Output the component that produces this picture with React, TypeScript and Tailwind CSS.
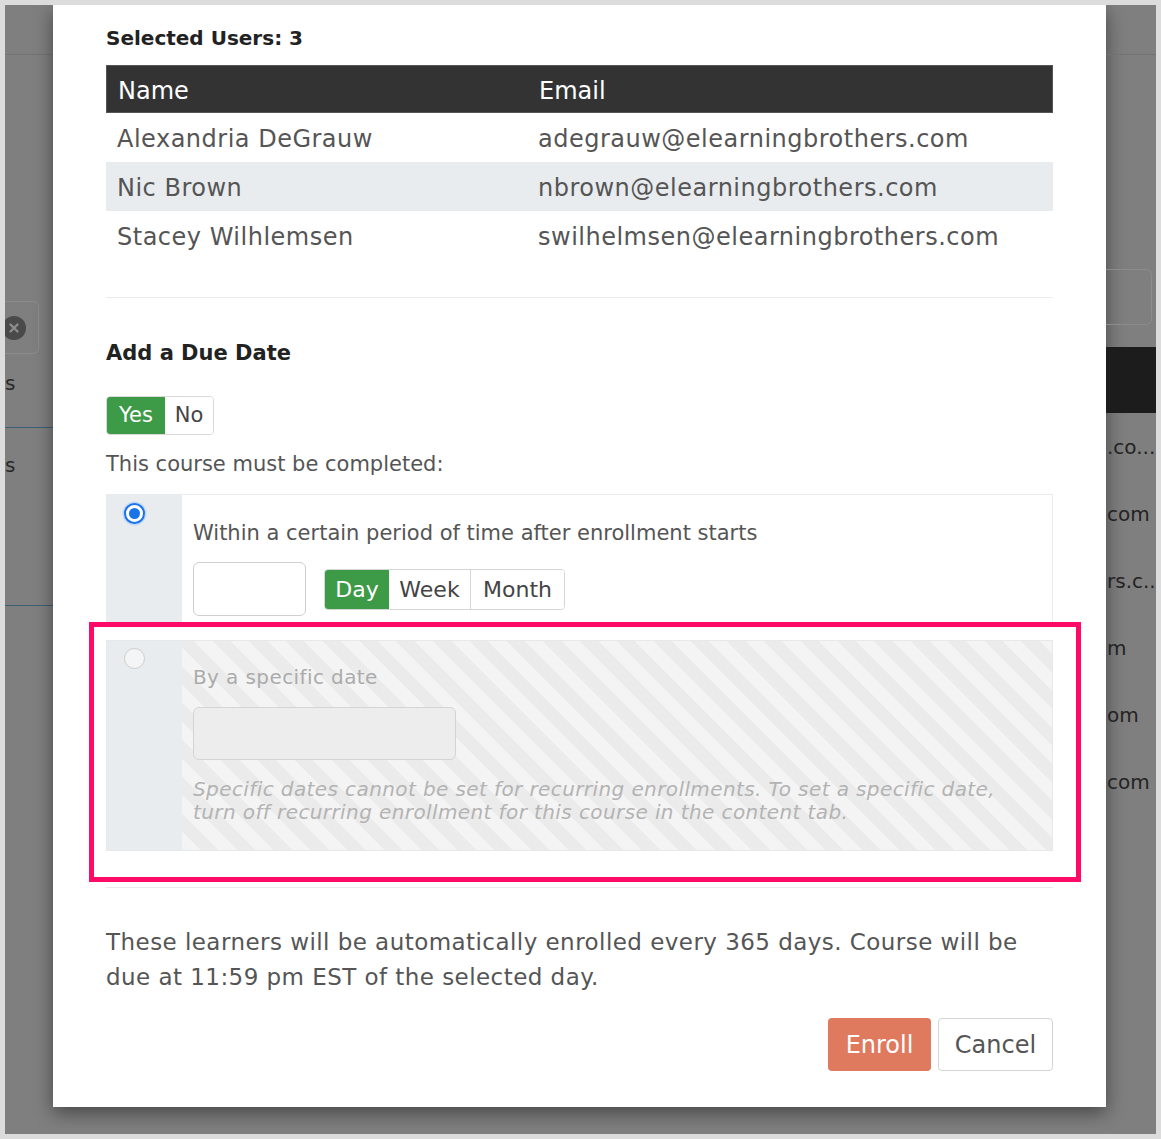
import React from 'react';

const users = [
  { name: 'Alexandria DeGrauw', email: 'adegrauw@elearningbrothers.com' },
  { name: 'Nic Brown', email: 'nbrown@elearningbrothers.com' },
  { name: 'Stacey Wilhlemsen', email: 'swilhelmsen@elearningbrothers.com' }
];

const rightRows = ['.co...', 'com', 'rs.c...', 'm', 'om', 'com'];

const LeftStrip = () => (
  <div className="flex w-[48px] shrink-0 flex-col text-[20px] text-[#2a2a2a]">
    <div className="h-[50px] border-b border-[#737373]" />
    <div className="mt-[246px] flex h-[53px] w-[34px] items-center rounded-r-md border border-l-0 border-[#8c8c8c]">
      <div className="-ml-[3px] flex h-[24px] w-[24px] items-center justify-center rounded-full bg-[#4a4a4a]">
        <svg width="12" height="12" viewBox="0 0 12 12">
          <path d="M2.5 2.5L9.5 9.5M9.5 2.5L2.5 9.5" stroke="#8c8c8c" strokeWidth="2.4" strokeLinecap="round" />
        </svg>
      </div>
    </div>
    <div className="mt-[14px] h-[30px] leading-[30px]">s</div>
    <div className="mt-[29px] h-px bg-[#3d5f73]" />
    <div className="mt-[22px] h-[30px] leading-[30px]">s</div>
    <div className="mt-[125px] h-px bg-[#3d5f73]" />
  </div>
);

const RightStrip = () => (
  <div className="flex flex-1 flex-col text-[20px] text-[#232323]">
    <div className="h-[50px] border-b border-[#737373]" />
    <div className="mt-[214px] h-[56px] w-[46px] rounded-r-md border border-l-0 border-[#8c8c8c]" />
    <div className="mt-[22px] h-[66px] bg-[#1c1c1c]" />
    {rightRows.map((t, i) => (
      <div key={i} className="flex h-[67px] items-center overflow-hidden whitespace-nowrap pl-[1px]">
        {t}
      </div>
    ))}
  </div>
);

const RadioOn = () => (
  <div className="flex h-[21px] w-[21px] items-center justify-center rounded-full border-2 border-[#1a73e8] bg-white shadow-[0_0_0_1.5px_#c3d8f8]">
    <div className="h-[11px] w-[11px] rounded-full bg-[#1a73e8]" />
  </div>
);

const RadioOff = () => (
  <div className="h-[21px] w-[21px] rounded-full border border-[#cdcdcd] bg-[#f4f5f6]" />
);

export default function App() {
  return (
    <div className="flex h-[1139px] w-[1161px] overflow-hidden border-[5px] border-[#dcdcdc] bg-[#7f7f7f] font-['DejaVu_Sans',sans-serif]">
      <LeftStrip />

      <div className="h-[1102px] w-[1053px] shrink-0 bg-white px-[53px] pt-[20px] shadow-[0_6px_18px_rgba(0,0,0,0.45)]">
        <h2 className="text-[20px] font-bold leading-[26px] text-[#222]">Selected Users: 3</h2>

        <div className="mt-[14px]">
          <div className="flex h-[48px] items-center border border-[#555] bg-[#333] pt-[3px] text-[24px] text-white">
            <div className="w-[421px] pl-[11px]">Name</div>
            <div className="pl-[11px]">Email</div>
          </div>
          {users.map((u, i) => (
            <div
              key={u.email}
              className={`flex h-[49px] items-center pt-[3px] text-[24px] tracking-[0.5px] text-[#555] ${i === 1 ? 'bg-[#e9ecef]' : 'bg-white'}`}
            >
              <div className="w-[421px] pl-[11px]">{u.name}</div>
              <div className="pl-[11px]">{u.email}</div>
            </div>
          ))}
        </div>

        <div className="mt-[37px] h-px bg-[#ebebeb]" />

        <h3 className="mt-[42px] text-[21px] font-bold leading-[26px] text-[#222]">Add a Due Date</h3>

        <div className="mt-[30px] flex h-[39px] w-[108px] overflow-hidden rounded border border-[#d9d9d9] text-[21px]">
          <div className="flex w-[58px] items-center justify-center bg-[#3d9a47] text-white">Yes</div>
          <div className="flex flex-1 items-center justify-center bg-white text-[#444]">No</div>
        </div>

        <p className="mt-[16px] text-[21px] leading-[26px] text-[#555]">This course must be completed:</p>

        <div className="mt-[17px] flex h-[131px] border border-[#e9ecef]">
          <div className="w-[75px] bg-[#e9ecef] pl-[17px] pt-[8px]">
            <RadioOn />
          </div>
          <div className="flex-1 bg-white pl-[11px] pt-[25px]">
            <div className="text-[21px] leading-[26px] text-[#555]">
              Within a certain period of time after enrollment starts
            </div>
            <div className="mt-[16px] flex items-center">
              <div className="h-[54px] w-[113px] rounded-md border border-[#cfcfcf] bg-white" />
              <div className="ml-[18px] flex h-[41px] overflow-hidden rounded border border-[#d6d6d6] text-[22px]">
                <div className="flex w-[64px] items-center justify-center bg-[#3d9a47] text-white">Day</div>
                <div className="flex w-[82px] items-center justify-center border-r border-[#d6d6d6] bg-white text-[#444]">Week</div>
                <div className="flex w-[93px] items-center justify-center bg-white text-[#444]">Month</div>
              </div>
            </div>
          </div>
        </div>

        <div className="relative mt-[15px]">
          <div className="flex h-[211px] border border-[#e6e9ec]">
            <div className="w-[75px] bg-[#e9ecef] pl-[17px] pt-[7px]">
              <RadioOff />
            </div>
            <div className="flex-1 bg-[repeating-linear-gradient(45deg,#f4f4f4_0px,#f4f4f4_13px,#ebebeb_13px,#ebebeb_26px)] pl-[11px] pt-[23px]">
              <div className="text-[20px] leading-[26px] tracking-[0.4px] text-[#ababab]">By a specific date</div>
              <div className="mt-[17px] h-[53px] w-[263px] rounded-md border border-[#d4d4d4] bg-[#ededed]" />
              <p className="mt-[18px] text-[20px] italic leading-[23px] tracking-[0.4px] text-[#b3b3b3]">
                Specific dates cannot be set for recurring enrollments. To set a specific date,
                <br />
                turn off recurring enrollment for this course in the content tab.
              </p>
            </div>
          </div>
          <div className="pointer-events-none absolute -bottom-[31px] -left-[17px] -right-[28px] -top-[18px] border-[5px] border-[#ff0a66]" />
        </div>

        <div className="mt-[36px] h-px bg-[#ebebeb]" />

        <p className="mt-[37px] text-[23px] leading-[35px] tracking-[0.45px] text-[#555]">
          These learners will be automatically enrolled every 365 days. Course will be
          <br />
          due at 11:59 pm EST of the selected day.
        </p>

        <div className="mt-[23px] flex justify-end gap-[7px]">
          <button className="h-[53px] w-[103px] rounded bg-[#e07a5f] text-[24px] text-white">Enroll</button>
          <button className="h-[53px] w-[115px] rounded border border-[#d4d4d4] bg-white text-[24px] text-[#555]">
            Cancel
          </button>
        </div>
      </div>

      <RightStrip />
    </div>
  );
}
